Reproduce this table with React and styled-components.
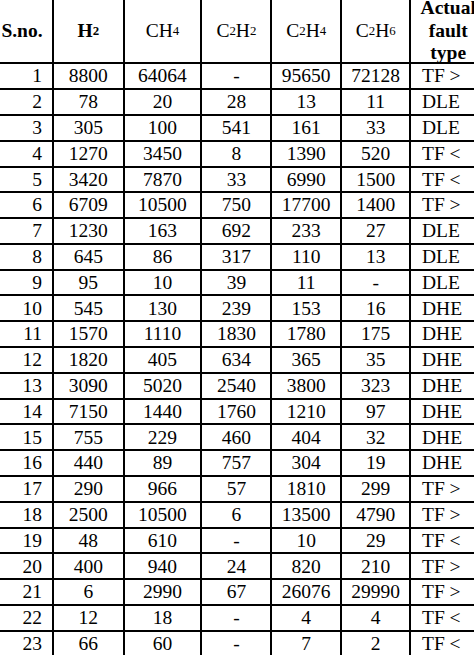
import React from "react";
import styled, { createGlobalStyle } from "styled-components";

const GlobalStyle = createGlobalStyle`
  html, body {
    margin: 0;
    padding: 0;
    background: #ffffff;
    overflow: hidden;
  }
  #root {
    width: 474px;
    height: 655px;
    overflow: hidden;
  }
`;

// column widths taken from the line positions in the scan
const COLUMNS = "62px 70.7px 77.6px 70.2px 69.5px 69.5px 75.5px";

const rows = [
  [1, "8800", "64064", "-", "95650", "72128", "TF >"],
  [2, "78", "20", "28", "13", "11", "DLE"],
  [3, "305", "100", "541", "161", "33", "DLE"],
  [4, "1270", "3450", "8", "1390", "520", "TF <"],
  [5, "3420", "7870", "33", "6990", "1500", "TF <"],
  [6, "6709", "10500", "750", "17700", "1400", "TF >"],
  [7, "1230", "163", "692", "233", "27", "DLE"],
  [8, "645", "86", "317", "110", "13", "DLE"],
  [9, "95", "10", "39", "11", "-", "DLE"],
  [10, "545", "130", "239", "153", "16", "DHE"],
  [11, "1570", "1110", "1830", "1780", "175", "DHE"],
  [12, "1820", "405", "634", "365", "35", "DHE"],
  [13, "3090", "5020", "2540", "3800", "323", "DHE"],
  [14, "7150", "1440", "1760", "1210", "97", "DHE"],
  [15, "755", "229", "460", "404", "32", "DHE"],
  [16, "440", "89", "757", "304", "19", "DHE"],
  [17, "290", "966", "57", "1810", "299", "TF >"],
  [18, "2500", "10500", "6", "13500", "4790", "TF >"],
  [19, "48", "610", "-", "10", "29", "TF <"],
  [20, "400", "940", "24", "820", "210", "TF >"],
  [21, "6", "2990", "67", "26076", "29990", "TF >"],
  [22, "12", "18", "-", "4", "4", "TF <"],
  [23, "66", "60", "-", "7", "2", "TF <"],
];

const Table = styled.div`
  display: grid;
  grid-template-columns: ${COLUMNS};
  grid-template-rows: 69px;
  grid-auto-rows: 25.8px;
  width: max-content;
  margin-left: -10px;
  margin-top: -4.7px;
  border-left: 2px solid #000;
  font-family: "Liberation Serif", "Times New Roman", serif;
  font-size: 19.5px;
  color: #000;
`;

const Cell = styled.div`
  box-sizing: border-box;
  display: flex;
  align-items: center;
  justify-content: ${(p) =>
    p.$align === "right" ? "flex-end" : p.$align === "left" ? "flex-start" : "center"};
  padding: ${(p) =>
    p.$align === "right" ? "0 10px 0 0" : p.$align === "left" ? "0 0 0 10.5px" : "0"};
  border-right: 2px solid #000;
  border-bottom: 2px solid #000;
  white-space: nowrap;
  line-height: 1;
`;

const HeadCell = styled(Cell)`
  font-weight: ${(p) => (p.$bold ? 700 : 400)};
  text-align: center;
  white-space: normal;
  line-height: 22.5px;
  padding: 4px 0 0 0;
`;

const Sub = styled.sub`
  font-size: 0.66em;
  vertical-align: -0.28em;
  line-height: 0;
`;

export default function App() {
  return (
    <>
      <GlobalStyle />
      <Table>
        <HeadCell $bold>S.no.</HeadCell>
        <HeadCell $bold>
          H<Sub>2</Sub>
        </HeadCell>
        <HeadCell>
          CH<Sub>4</Sub>
        </HeadCell>
        <HeadCell>
          C<Sub>2</Sub>H<Sub>2</Sub>
        </HeadCell>
        <HeadCell>
          C<Sub>2</Sub>H<Sub>4</Sub>
        </HeadCell>
        <HeadCell>
          C<Sub>2</Sub>H<Sub>6</Sub>
        </HeadCell>
        <HeadCell $bold>
          Actual
          <br />
          fault
          <br />
          type
        </HeadCell>

        {rows.map((r) => (
          <React.Fragment key={r[0]}>
            <Cell $align="right">{r[0]}</Cell>
            <Cell>{r[1]}</Cell>
            <Cell>{r[2]}</Cell>
            <Cell>{r[3]}</Cell>
            <Cell>{r[4]}</Cell>
            <Cell>{r[5]}</Cell>
            <Cell $align="left">{r[6]}</Cell>
          </React.Fragment>
        ))}
      </Table>
    </>
  );
}
